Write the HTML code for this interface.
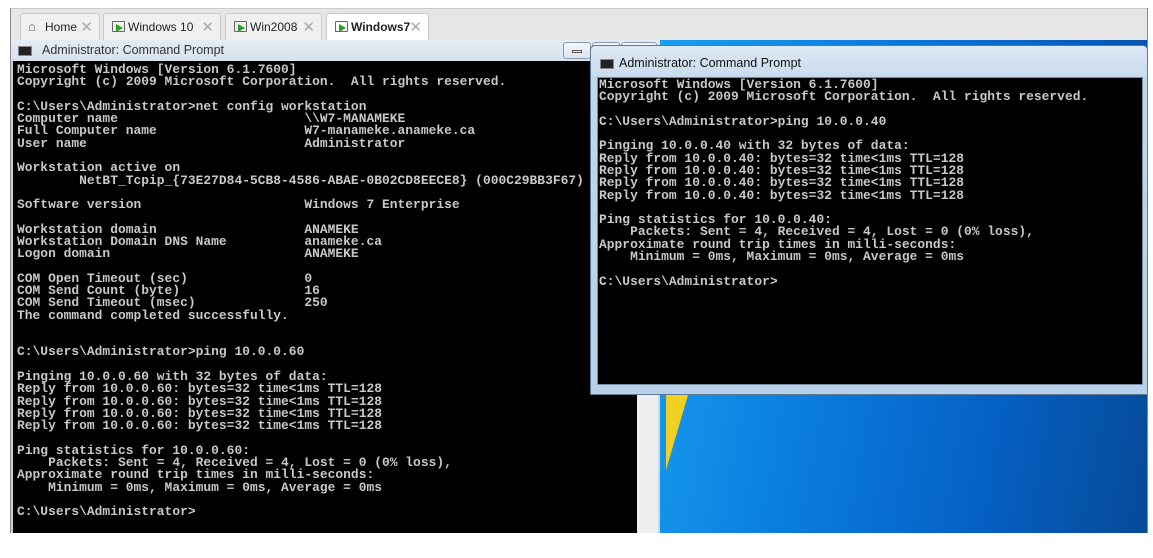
<!DOCTYPE html>
<html><head><meta charset="utf-8"><style>
*{margin:0;padding:0;box-sizing:border-box}
body{width:1153px;height:558px;background:#fff;position:relative;overflow:hidden;font-family:"Liberation Sans",sans-serif}
.abs{position:absolute}
pre{position:absolute;font-family:"Liberation Mono",monospace;font-weight:bold;font-size:12.9px;line-height:12.28px;color:#c8c8c8;letter-spacing:0.03px;white-space:pre}
.tab{position:absolute;top:13px;height:27px;border:1px solid #c9c9c9;border-bottom:none;background:#f0f0f0;border-radius:3px 3px 0 0;font-size:12px;color:#222;padding:6px 0 0 24px}
.tab .x{position:absolute;right:6px;top:4px;color:#aaa;font-size:15px}
.ic{position:absolute;left:8px;top:7px;width:13px;height:11px;border:1px solid #666;border-radius:1px}
.ic:after{content:"";position:absolute;left:3px;top:2px;border-left:7px solid #2aa02a;border-top:4px solid transparent;border-bottom:4px solid transparent}
.cmdic{position:absolute;width:14px;height:10px;background:#222;border:1px solid #888}
.btn{position:absolute;top:42px;height:17px;border:1px solid #8a9aae;border-radius:3px;background:linear-gradient(#f4f7fa,#dbe4ee)}
</style></head><body>
<div class="abs" style="left:0;top:0;width:1153px;height:8px;background:#fff"></div>
<div class="abs" style="left:10px;top:8px;width:1138px;height:33px;background:#e6e6e6;border-top:1px solid #ccc"></div>
<div class="abs" style="left:10px;top:8px;width:1px;height:525px;background:#888"></div>
<div class="abs" style="left:1147px;top:8px;width:1px;height:525px;background:#888"></div>
<div class="tab" style="left:20px;width:80px"><span style="position:absolute;left:7px;top:5px;font-size:13px;color:#666">⌂</span>Home<span class="x">✕</span></div>
<div class="tab" style="left:103px;width:118px"><span class="ic"></span>Windows 10<span class="x">✕</span></div>
<div class="tab" style="left:225px;width:97px"><span class="ic"></span>Win2008<span class="x">✕</span></div>
<div class="tab" style="left:326px;width:103px;background:#fff;font-weight:bold;height:28px"><span class="ic"></span>Windows7<span class="x" style="font-weight:normal">✕</span></div>
<div class="abs" style="left:660px;top:40px;width:487px;height:493px;background:linear-gradient(100deg,#1aa0ee 0%,#0a7ee0 35%,#0560c4 70%,#064a98 100%)"></div>
<div class="abs" style="left:666px;top:395px;width:0;height:0;border-left:22px solid #f0d020;border-bottom:75px solid transparent"></div>
<div class="abs" style="left:637px;top:60px;width:23px;height:473px;background:#eceeef;border-right:2px solid #c8d8e6"></div>
<div class="abs" style="left:11px;top:40px;width:649px;height:21px;background:linear-gradient(#e4ecf4,#d6e2ee)"></div>
<div class="cmdic" style="left:18px;top:46px"></div>
<div class="abs" style="left:42px;top:43px;font-size:12.5px;color:#333">Administrator: Command Prompt</div>
<div class="btn" style="left:563px;width:28px"><div style="margin:7px auto 0;width:10px;height:3px;border:1px solid #555"></div></div>
<div class="btn" style="left:592px;width:28px"></div>
<div class="btn" style="left:621px;width:36px"></div>
<div class="abs" style="left:11px;top:61px;width:626px;height:472px;background:#000;border-left:2px solid #c8d2dc"></div>
<pre style="left:17px;top:64px">Microsoft Windows [Version 6.1.7600]
Copyright (c) 2009 Microsoft Corporation.  All rights reserved.

C:\Users\Administrator>net config workstation
Computer name                        \\W7-MANAMEKE
Full Computer name                   W7-manameke.anameke.ca
User name                            Administrator

Workstation active on
        NetBT_Tcpip_{73E27D84-5CB8-4586-ABAE-0B02CD8EECE8} (000C29BB3F67)

Software version                     Windows 7 Enterprise

Workstation domain                   ANAMEKE
Workstation Domain DNS Name          anameke.ca
Logon domain                         ANAMEKE

COM Open Timeout (sec)               0
COM Send Count (byte)                16
COM Send Timeout (msec)              250
The command completed successfully.


C:\Users\Administrator>ping 10.0.0.60

Pinging 10.0.0.60 with 32 bytes of data:
Reply from 10.0.0.60: bytes=32 time&lt;1ms TTL=128
Reply from 10.0.0.60: bytes=32 time&lt;1ms TTL=128
Reply from 10.0.0.60: bytes=32 time&lt;1ms TTL=128
Reply from 10.0.0.60: bytes=32 time&lt;1ms TTL=128

Ping statistics for 10.0.0.60:
    Packets: Sent = 4, Received = 4, Lost = 0 (0% loss),
Approximate round trip times in milli-seconds:
    Minimum = 0ms, Maximum = 0ms, Average = 0ms

C:\Users\Administrator></pre>
<div class="abs" style="left:590px;top:45px;width:558px;height:350px;background:linear-gradient(#c4d8ec,#b8d0e8);border:1px solid #5c7a98;border-radius:5px 5px 0 0"></div>
<div class="abs" style="left:591px;top:46px;width:556px;height:30px;background:linear-gradient(#dfeaf5,#c9dbee);border-radius:5px 5px 0 0"></div>
<div class="cmdic" style="left:600px;top:59px"></div>
<div class="abs" style="left:619px;top:56px;font-size:12.5px;color:#111">Administrator: Command Prompt</div>
<div class="abs" style="left:597px;top:77px;width:546px;height:308px;background:#000;border:1px solid #7a8ea4"></div>
<pre style="left:599px;top:79px">Microsoft Windows [Version 6.1.7600]
Copyright (c) 2009 Microsoft Corporation.  All rights reserved.

C:\Users\Administrator>ping 10.0.0.40

Pinging 10.0.0.40 with 32 bytes of data:
Reply from 10.0.0.40: bytes=32 time&lt;1ms TTL=128
Reply from 10.0.0.40: bytes=32 time&lt;1ms TTL=128
Reply from 10.0.0.40: bytes=32 time&lt;1ms TTL=128
Reply from 10.0.0.40: bytes=32 time&lt;1ms TTL=128

Ping statistics for 10.0.0.40:
    Packets: Sent = 4, Received = 4, Lost = 0 (0% loss),
Approximate round trip times in milli-seconds:
    Minimum = 0ms, Maximum = 0ms, Average = 0ms

C:\Users\Administrator></pre>
<div class="abs" style="left:0;top:533px;width:1153px;height:25px;background:#fff"></div>
</body></html>
